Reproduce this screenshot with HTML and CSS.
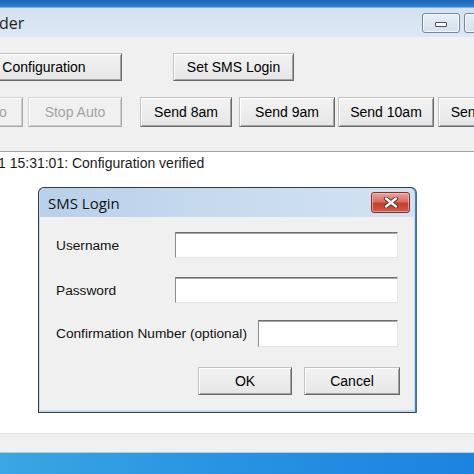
FILE: index.html
```html
<!DOCTYPE html>
<html>
<head>
<meta charset="utf-8">
<link rel="stylesheet" href="styles.css">
</head>
<body>
<div class="screen">
  <div class="frame-top"></div>
  <div class="titlebar">
    <span class="title">der</span>
    <div class="controls">
      <span class="ctl"><span class="min-bar"></span></span>
      <span class="ctl"></span>
    </div>
  </div>
  <div class="toolbar">
    <div class="row row-top">
      <button class="btn b-config">Configuration</button>
      <button class="btn b-sms">Set SMS Login</button>
    </div>
    <div class="row row-send">
      <button class="btn b-start" disabled>Start Auto</button>
      <button class="btn b-stop" disabled>Stop Auto</button>
      <button class="btn b-8">Send 8am</button>
      <button class="btn b-9">Send 9am</button>
      <button class="btn b-10">Send 10am</button>
      <button class="btn b-11">Send 11am</button>
    </div>
  </div>
  <div class="log">
    <div class="log-line">1 15:31:01: Configuration verified</div>
  </div>
  <div class="statusbar"></div>
  <div class="taskbar"></div>

  <div class="dialog">
    <div class="dlg-title">
      <span class="dlg-caption">SMS Login</span>
      <span class="close">
        <svg width="16" height="11" viewBox="0 0 16 11">
          <path d="M3 1.5 L13 9.5 M13 1.5 L3 9.5" stroke="#5a2a26" stroke-width="4.2" stroke-linecap="round"/>
          <path d="M3 1.5 L13 9.5 M13 1.5 L3 9.5" stroke="#ffffff" stroke-width="2.4" stroke-linecap="round"/>
        </svg>
      </span>
    </div>
    <div class="dlg-body">
      <div class="field f-user">
        <label>Username</label>
        <input class="inp inp-wide" type="text">
      </div>
      <div class="field f-pass">
        <label>Password</label>
        <input class="inp inp-wide" type="password">
      </div>
      <div class="field f-conf">
        <label>Confirmation Number (optional)</label>
        <input class="inp inp-short" type="text">
      </div>
      <div class="actions">
        <button class="btn b-ok">OK</button>
        <button class="btn b-cancel">Cancel</button>
      </div>
    </div>
  </div>
</div>
</body>
</html>
```

FILE: styles.css
```css
* { box-sizing: border-box; }

html, body {
  margin: 0;
  padding: 0;
  width: 474px;
  height: 474px;
  overflow: hidden;
  background: #ffffff;
}

.screen {
  position: relative;
  width: 474px;
  height: 474px;
  overflow: hidden;
  display: flex;
  flex-direction: column;
  font-family: "Liberation Sans", Arial, sans-serif;
  font-size: 14px;
  color: #000;
}

/* outer window frame edge */
.frame-top {
  height: 8px;
  flex: none;
  background: linear-gradient(#1d64b4, #2a7fd0 80%, #9cc3ea);
}

/* main window caption */
.titlebar {
  height: 30px;
  flex: none;
  display: flex;
  align-items: flex-start;
  justify-content: space-between;
  background: linear-gradient(#d3e1f0, #dde8f4);
  border-bottom: 1px solid #eef3f9;
}

.title {
  font-family: "Open Sans", "Noto Sans", sans-serif;
  font-size: 16px;
  line-height: 30px;
  color: #1e1e1e;
  margin-left: -1px;
}

.controls {
  display: flex;
  gap: 4px;
  padding-top: 5px;
  margin-right: -28px;
}

.ctl {
  width: 38px;
  height: 20px;
  border: 1px solid #7b8796;
  border-radius: 3px;
  background: linear-gradient(#e8eff7, #d5e1ee);
  box-shadow: inset 0 0 0 1px rgba(255,255,255,0.7);
  display: flex;
  align-items: center;
  justify-content: center;
}

.min-bar {
  width: 12px;
  height: 5px;
  border: 1px solid #4a4f57;
  border-radius: 1px;
  background: #fff;
  margin-top: 2px;
}

/* button area */
.toolbar {
  height: 114px;
  flex: none;
  background: #f0f0f0;
  border-bottom: 1px solid #a3a3a3;
  padding-top: 15px;
  display: flex;
  flex-direction: column;
  gap: 16px;
}

.row {
  display: flex;
  align-items: flex-start;
}

.btn {
  flex: none;
  padding: 0;
  margin: 0;
  font-family: "Liberation Sans", Arial, sans-serif;
  font-size: 14px;
  color: #000;
  text-align: center;
  background: linear-gradient(#f3f3f3, #e6e6e6);
  border: 1px solid;
  border-color: #c2c2c2 #6a6a6a #6a6a6a #c2c2c2;
  box-shadow: inset 1px 1px 0 #ffffff, inset -1px -1px 0 #a2a2a2;
  border-radius: 0;
}

.btn:disabled {
  color: #a3a3a3;
  border-color: #d2d2d2 #a8a8a8 #a8a8a8 #d2d2d2;
  box-shadow: inset 1px 1px 0 #ffffff, inset -1px -1px 0 #cdcdcd;
  background: #f0f0f0;
}

.row-top .btn { height: 28px; }
.row-send .btn { height: 30px; }

.b-config { width: 156px; margin-left: -34px; }
.b-sms    { width: 121px; margin-left: 51px; }

.b-start { width: 94px; margin-left: -71px; }
.b-stop  { width: 94px; margin-left: 5px; }
.b-8     { width: 92px; margin-left: 18px; }
.b-9     { width: 96px; margin-left: 7px; }
.b-10    { width: 96px; margin-left: 3px; }
.b-11    { width: 96px; margin-left: 4px; }

/* message log */
.log {
  flex: 1;
  background: #ffffff;
  padding-top: 2px;
}

.log-line {
  margin-left: -2px;
  line-height: 18px;
  color: #1a1a1a;
  white-space: nowrap;
}

.statusbar {
  height: 20px;
  flex: none;
  background: #f0f0f0;
  border-top: 1px solid #e2e2e2;
  border-bottom: 1px solid #c9c9c9;
}

.taskbar {
  height: 21px;
  flex: none;
  background: linear-gradient(to right, #3aa6e2, #2792e2 50%, #1d83e0);
}

/* modal login dialog */
.dialog {
  position: absolute;
  left: 38px;
  top: 187px;
  width: 378px;
  height: 226px;
  border: 1px solid #333b44;
  border-right-color: #2b8cc6;
  border-radius: 6px 6px 0 0;
  background: #c6dbf0;
  display: flex;
  flex-direction: column;
  padding: 0 1px 2px 1px;
  box-shadow: 1px 0 0 #5b6a78;
}

.dlg-title {
  height: 29px;
  flex: none;
  display: flex;
  align-items: flex-start;
  justify-content: space-between;
  background: linear-gradient(to right, #b9d0ea, #cadcf0 60%, #d2e2f2);
  border-radius: 5px 5px 0 0;
  padding: 4px 4px 0 8px;
}

.dlg-caption {
  font-family: "Open Sans", "Noto Sans", sans-serif;
  font-size: 15px;
  line-height: 22px;
  color: #121212;
}

.close {
  width: 39px;
  height: 21px;
  border: 1px solid #7e3129;
  border-radius: 3px;
  background: linear-gradient(#e8a69c, #d86e60 45%, #c3402f 55%, #cf5a48);
  box-shadow: inset 0 0 0 1px rgba(255,210,200,0.55);
  display: flex;
  align-items: center;
  justify-content: center;
}

.close svg { display: block; }

.dlg-body {
  flex: 1;
  background: #f0f0f0;
  padding: 15px 16px 0 16px;
  display: flex;
  flex-direction: column;
}

.field {
  display: flex;
  align-items: center;
  justify-content: space-between;
}

.f-pass { margin-top: 19px; }
.f-conf { margin-top: 17px; }

.field label {
  white-space: nowrap;
  color: #111;
  font-size: 13.7px;
}

.inp {
  height: 26px;
  margin: 0;
  padding: 0 4px;
  background: #ffffff;
  border: 1px solid;
  border-color: #6f6f6f #e3e3e3 #e3e3e3 #8c8c8c;
  box-shadow: inset 0 1px 0 #a6a6a6;
  font-family: "Liberation Sans", Arial, sans-serif;
  font-size: 14px;
}

.inp-wide  { width: 223px; }
.inp-short { width: 140px; height: 27px; }

.actions {
  display: flex;
  justify-content: flex-end;
  gap: 12px;
  margin-top: 20px;
  margin-right: -2px;
}

.actions .btn { height: 28px; }
.b-ok     { width: 94px; }
.b-cancel { width: 96px; }
```
